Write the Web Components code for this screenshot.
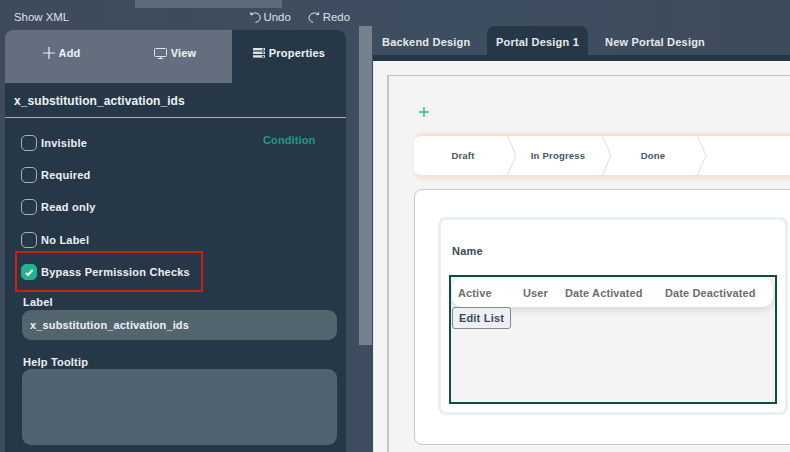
<!DOCTYPE html>
<html>
<head>
<meta charset="utf-8">
<title>Portal Design</title>
<style>
  html, body { margin: 0; height: 100%; overflow: hidden; }
  body { background: #3e4b5c; font-family: "Liberation Sans", Arial, sans-serif; }
</style>
</head>
<body>
<designer-page>
  <side-panel slot="side">
    <check-row>Invisible</check-row>
    <check-row>Required</check-row>
    <check-row>Read only</check-row>
    <check-row>No Label</check-row>
    <check-row checked flagged>Bypass Permission Checks</check-row>
  </side-panel>
  <design-canvas slot="main"></design-canvas>
</designer-page>

<script>
const undoIcon = `<svg width="11" height="11" viewBox="0 0 11 11" fill="none" stroke="#e4e7ea" stroke-width="1"><path d="M.8 .2 V2.6 H3.2 M1 2.4 C2.4 1.2 4.4 .8 6 1 C8.6 1.4 10.2 3.4 10.2 5.6 C10.2 8.2 8.2 10.2 5.4 10.4"/></svg>`
const redoIcon = `<svg width="12" height="11" viewBox="0 0 12 11" fill="none" stroke="#e4e7ea" stroke-width="1"><path d="M10.6 .2 V2.6 H8.2 M10.4 2.4 C9.2 1.4 7.8 .8 6.2 1 C3.2 1.2 1 3.2 1 5.8 C1 8 2.8 10 5 10.4"/></svg>`
const plusIcon = `<svg width="12" height="12" viewBox="0 0 12 12" stroke="#f2f3f5" stroke-width="1.2"><path d="M6 0 V12 M0 6 H12"/></svg>`
const viewIcon = `<svg width="13" height="11" viewBox="0 0 13 11" fill="none" stroke="#dfe2e6" stroke-width="1"><rect x=".5" y=".5" width="12" height="8" rx="1"/><path d="M4 10.5 H9 M6.5 8.5 V10.5"/></svg>`
const propsIcon = `<svg width="12" height="10" viewBox="0 0 12 10" fill="#dfe2e6"><rect y="0" width="12" height="2.4"/><rect y="3.6" width="12" height="2.4"/><rect y="7.2" width="12" height="2.4"/><rect x="9" y=".7" width="2" height="1" fill="#263847"/><rect x="9" y="4.3" width="2" height="1" fill="#263847"/><rect x="9" y="7.9" width="2" height="1" fill="#263847"/></svg>`

class checkRow extends HTMLElement
{
    constructor(){
        super()
        this._shadowRoot = this.attachShadow({mode: 'open'})
    }
    connectedCallback(){
        const checked = this.hasAttribute('checked')
        this._shadowRoot.innerHTML = `
        <style>
            :host{
                display: flex;
                align-items: center;
                gap: 4px;
                height: 32.4px;
                padding-left: 16px;
                box-sizing: border-box;
                font-size: 11px;
                font-weight: bold;
                letter-spacing: .22px;
                color: #eef0f2;
            }
            :host([flagged]){
                width: 188px;
                height: 41px;
                margin-left: 10px;
                margin-top: -5px;
                padding-left: 4px;
                padding-top: 1px;
                border: 2px solid #c8210d;
            }
            .box{
                width: 14px;
                height: 14px;
                border: 1px solid #a9b1b8;
                border-radius: 5px;
                display: flex;
                align-items: center;
                justify-content: center;
                flex: none;
            }
            .box.on{
                background: #21b38c;
                border-color: #21b38c;
            }
        </style>
        <span class="box ${checked ? 'on' : ''}">
            ${checked ? '<svg width="9" height="8" viewBox="0 0 9 8" fill="none" stroke="#fff" stroke-width="2"><path d="M1 4.8 L3 7 L7.6 1.8"/></svg>' : ''}
        </span>
        <slot></slot>`
    }
}
window.customElements.define('check-row', checkRow)

class sidePanel extends HTMLElement
{
    constructor(){
        super()
        this._shadowRoot = this.attachShadow({mode: 'open'})
        this._shadowRoot.innerHTML = `
        <style>
            :host{
                display: flex;
                width: 373px;
                height: 452px;
                flex: none;
                color: #eef0f2;
            }
            .col{
                width: 359px;
                display: flex;
                flex-direction: column;
            }
            .bar{
                height: 30px;
                display: flex;
                align-items: flex-start;
                box-sizing: border-box;
                padding-left: 14px;
                font-size: 11.4px;
                color: #dfe2e6;
                white-space: nowrap;
            }
            .show{ margin-top: 11px; width: 121px; flex: none; }
            .hist{ display: flex; gap: 17px; margin: 11px 9px 0 auto; }
            .hist span{ display: flex; align-items: center; gap: 3px; }
            .stub{
                width: 147px;
                height: 8px;
                flex: none;
                background: #5f6b7c;
                margin-right: -147px;
            }
            .panel{
                margin-left: 5px;
                width: 341px;
                flex: 1;
                background: #263847;
                border-radius: 8px 8px 0 0;
                overflow: hidden;
            }
            .tabs{
                display: grid;
                grid-template-columns: 113px 114px 114px;
                height: 53px;
                background: #636e7f;
                font-size: 11px;
                font-weight: bold;
                letter-spacing: .2px;
            }
            .tabs div{
                display: flex;
                align-items: center;
                justify-content: center;
                gap: 4px;
                color: #f2f3f5;
                padding-bottom: 7px;
                box-sizing: border-box;
            }
            .tabs .on{ background: #263847; }
            .name{
                height: 35px;
                box-sizing: border-box;
                padding: 11px 0 0 9px;
                font-size: 12px;
                font-weight: bold;
                letter-spacing: .07px;
                border-bottom: 1px solid #a7adb3;
            }
            .body{
                position: relative;
                padding-top: 8.4px;
            }
            .condition{
                position: absolute;
                left: 258px;
                top: 16px;
                font-size: 11px;
                font-weight: bold;
                letter-spacing: .12px;
                color: #1e9c80;
            }
            .field{
                margin: 0 9px 0 18px;
                font-size: 11px;
                font-weight: bold;
                letter-spacing: .2px;
            }
            .field .cap{ height: 12px; line-height: 14px; margin-bottom: 3px; }
            .input{
                height: 30px;
                border-radius: 9px;
                background: #52656f;
                padding: 9px 0 0 8px;
                margin-left: -1px;
                box-sizing: border-box;
                letter-spacing: .15px;
            }
            .area{
                height: 76px;
                margin-left: -1px;
                border-radius: 9px;
                background: #506372;
            }
            .scroll{
                width: 13px;
                height: 319px;
                margin-top: 26px;
                background: #77808f;
            }
        </style>
        <div class="col">
            <div class="bar">
                <span class="show">Show XML</span>
                <span class="stub"></span>
                <span class="hist">
                    <span>${undoIcon}Undo</span>
                    <span>${redoIcon}Redo</span>
                </span>
            </div>
            <div class="panel">
                <div class="tabs">
                    <div>${plusIcon}Add</div>
                    <div>${viewIcon}View</div>
                    <div class="on">${propsIcon}Properties</div>
                </div>
                <div class="name">x_substitution_activation_ids</div>
                <div class="body">
                    <span class="condition">Condition</span>
                    <slot></slot>
                    <div class="field" style="margin-top:3px">
                        <div class="cap">Label</div>
                        <div class="input">x_substitution_activation_ids</div>
                    </div>
                    <div class="field" style="margin-top:15px">
                        <div class="cap" style="margin-bottom:2px">Help Tooltip</div>
                        <div class="area"></div>
                    </div>
                </div>
            </div>
        </div>
        <div class="scroll"></div>`
    }
}
window.customElements.define('side-panel', sidePanel)

class designCanvas extends HTMLElement
{
    constructor(){
        super()
        this._shadowRoot = this.attachShadow({mode: 'open'})
        const chevron = `<svg class="chev" width="10" height="39" viewBox="0 0 10 39" fill="none" stroke="#dcdfe2"><path d="M.5 0 L9 19.5 L.5 39"/></svg>`
        this._shadowRoot.innerHTML = `
        <style>
            :host{
                display: flex;
                flex-direction: column;
                flex: 1;
                min-width: 0;
                height: 452px;
                padding-top: 26px;
                box-sizing: border-box;
                overflow: hidden;
            }
            .tabs{
                display: flex;
                height: 35px;
                box-sizing: border-box;
                flex: none;
                font-size: 11px;
                font-weight: bold;
                letter-spacing: .2px;
                color: #e6e9ec;
                border-bottom: 6px solid #263847;
            }
            .tabs div{ display: flex; align-items: center; padding-top: 2px; box-sizing: border-box; }
            .tabs .a{ padding-left: 9px; width: 114px; }
            .tabs .b{ width: 101px; justify-content: center; background: #263847; border-radius: 8px 8px 0 0; }
            .tabs .c{ padding-left: 17px; }
            .stage{
                flex: 1;
                background: #f4f4f4;
                padding: 14px 0 0 13px;
                border-left: 1px solid #e8e8e8;
            }
            .sheet{
                height: 400px;
                width: 440px;
                background: #f4f4f4;
                border: 1px solid #c4c4c4;
                border-left-width: 2px;
                box-sizing: border-box;
                padding: 31px 0 0 25px;
            }
            .plus{ display: block; margin-left: 5px; }
            .steps{
                margin-top: 16px;
                height: 45px;
                background: #fff;
                border-top: 3px solid #fde0d5;
                border-bottom: 3px solid #fde0d5;
                border-radius: 8px 0 0 8px;
                box-sizing: border-box;
                display: flex;
                font-size: 9.5px;
                font-weight: bold;
                letter-spacing: .2px;
                color: #465565;
                box-shadow: 0 2px 5px rgba(0,0,0,.05);
            }
            .step{
                width: 95px;
                flex: none;
                display: flex;
                align-items: center;
                justify-content: center;
                position: relative;
                box-sizing: border-box;
                padding-left: 3px;
            }
            .chev{ position: absolute; right: -8px; top: 0; }
            .card{
                margin-top: 11px;
                height: 256px;
                background: #fff;
                border: 1px solid #c8c8c8;
                border-radius: 8px;
                box-sizing: border-box;
                padding: 27px 0 0 23px;
            }
            .inner{
                width: 350px;
                height: 198px;
                border: 3px solid #e6f1f0;
                border-radius: 8px;
                box-sizing: border-box;
                padding: 0 0 0 8px;
            }
            .cap{
                margin: 25px 0 0 3px;
                height: 13px;
                line-height: 13px;
                font-size: 11px;
                font-weight: bold;
                color: #3b4a5a;
                letter-spacing: .2px;
            }
            .grid{
                margin-top: 17px;
                width: 328px;
                height: 129px;
                border: 2px solid #0f4f43;
                box-sizing: border-box;
                background: #f4f4f4;
                padding-top: 1px;
                padding-left: 1px;
            }
            .head{
                width: 321px;
                height: 29px;
                background: #fff;
                border-radius: 10px;
                box-shadow: 0 3px 8px rgba(0,0,0,.12);
                font-size: 11px;
                font-weight: bold;
                letter-spacing: .12px;
                color: #6d6d6d;
                display: grid;
                grid-template-columns: 65px 42px 100px auto;
                align-items: center;
                padding-left: 6px;
                box-sizing: border-box;
            }
            .edit{
                display: block;
                width: 59px;
                height: 22px;
                padding: 0;
                background: #eef0f2;
                border: 1px solid #888;
                border-radius: 3px;
                font: bold 11px "Liberation Sans", Arial, sans-serif;
                letter-spacing: .2px;
                color: #3b4a5a;
            }
        </style>
        <div class="tabs">
            <div class="a">Backend Design</div>
            <div class="b">Portal Design 1</div>
            <div class="c">New Portal Design</div>
        </div>
        <div class="stage">
            <div class="sheet">
                <svg class="plus" width="10" height="10" viewBox="0 0 10 10" stroke="#2bb48f" stroke-width="1.3"><path d="M5 0 V10 M0 5 H10"/></svg>
                <div class="steps">
                    <div class="step">Draft${chevron}</div>
                    <div class="step">In Progress${chevron}</div>
                    <div class="step">Done${chevron}</div>
                </div>
                <div class="card">
                    <div class="inner">
                        <div class="cap">Name</div>
                        <div class="grid">
                            <div class="head">
                                <span>Active</span><span>User</span><span>Date Activated</span><span>Date Deactivated</span>
                            </div>
                            <button class="edit">Edit List</button>
                        </div>
                    </div>
                </div>
            </div>
        </div>`
    }
}
window.customElements.define('design-canvas', designCanvas)

class designerPage extends HTMLElement
{
    constructor(){
        super()
        this._shadowRoot = this.attachShadow({mode: 'open'})
        this._shadowRoot.innerHTML = `
        <style>
            :host{
                display: flex;
                width: 790px;
                height: 452px;
                overflow: hidden;
                background: linear-gradient(90deg, #3e4b5c, #3d4e60 60%, #3e4b5c);
            }
        </style>
        <slot name="side"></slot>
        <slot name="main"></slot>`
    }
}
window.customElements.define('designer-page', designerPage)
</script>
</body>
</html>
